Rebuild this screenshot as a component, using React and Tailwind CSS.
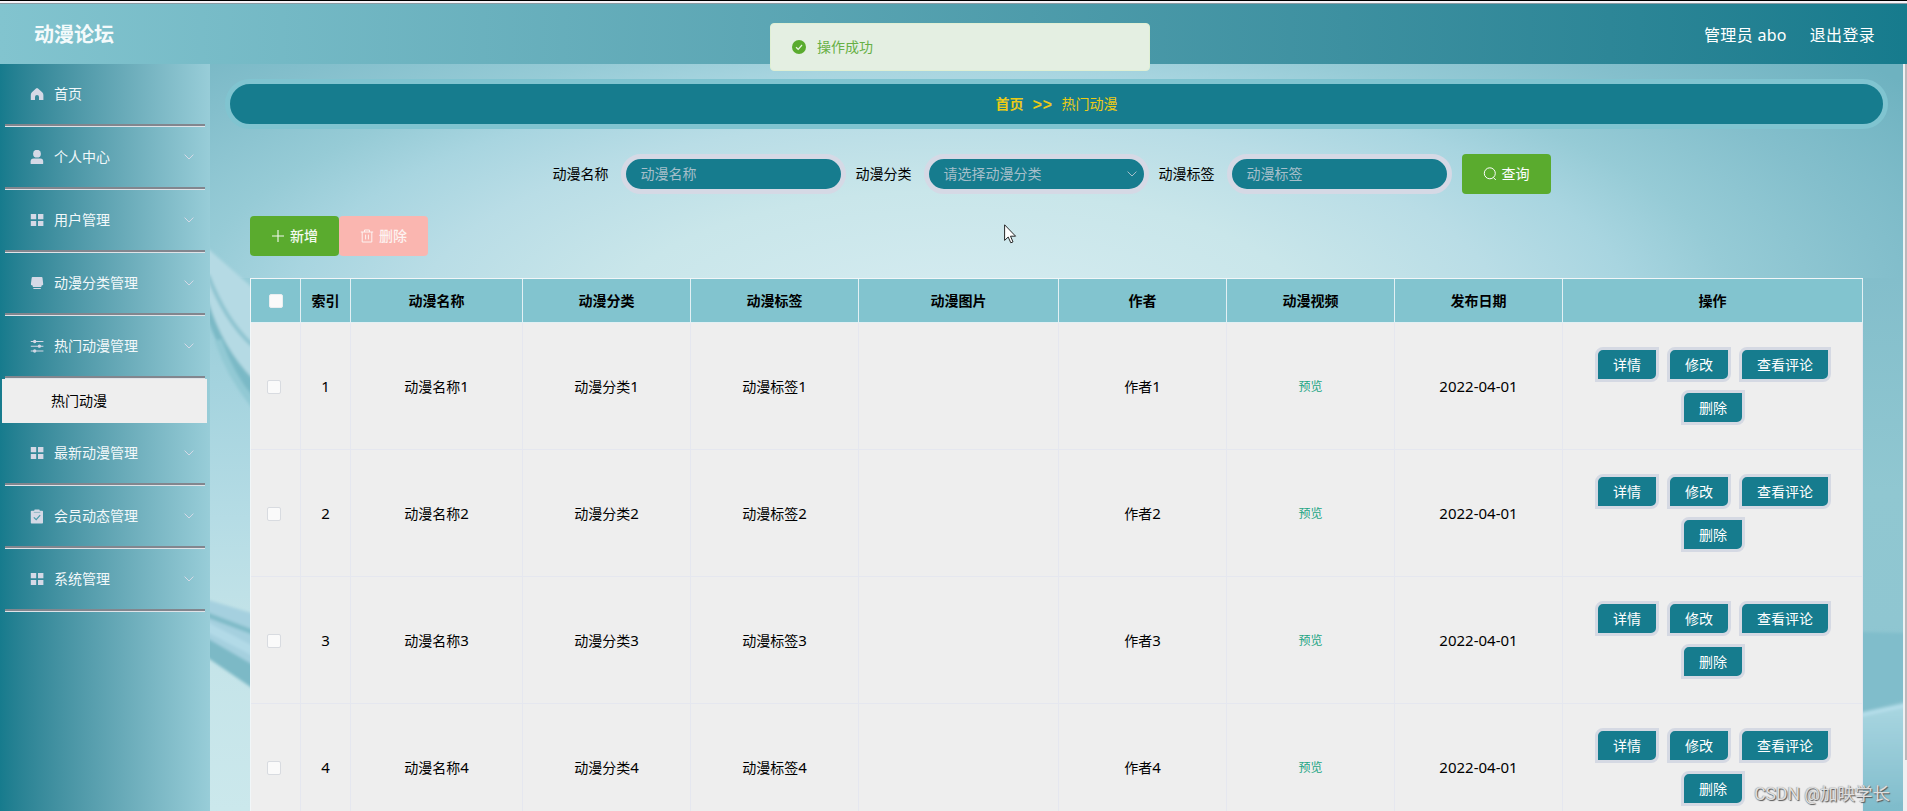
import React from "react";

const HomeIcon = () => (
  <svg width="14" height="14" viewBox="0 0 14 14" fill="currentColor">
    <path d="M7 1 Q7.4 1 8 1.6 L12.2 5.3 Q13.4 6.4 13.4 8 V13 H9 V10 A2 2 0 0 0 5 10 V13 H0.8 V8 Q0.8 6.4 1.9 5.3 L6 1.6 Q6.6 1 7 1Z" />
  </svg>
);
const UserIcon = () => (
  <svg width="14" height="14" viewBox="0 0 14 14" fill="currentColor">
    <circle cx="7" cy="3.7" r="3.9" />
    <path d="M0.6 13.4 V11.5 Q0.6 8.6 3.6 8.6 H10.4 Q13.2 8.6 13.2 11.5 V13.4 Q13.2 14 12.6 14 H1.2 Q0.6 14 0.6 13.4Z" />
  </svg>
);
const GridIcon = () => (
  <svg width="14" height="14" viewBox="0 0 14 14" fill="currentColor">
    <path d="M0.8 1H6.2V6.2H0.8ZM8 1H13.4V6.2H8ZM0.8 8H6.2V13H0.8ZM8 8H13.4V13H8Z" />
  </svg>
);
const CupIcon = () => (
  <svg width="14" height="14" viewBox="0 0 14 14" fill="currentColor">
    <path d="M2.6 1H11.6Q12.4 1 12.5 1.8L13.2 8Q13.3 9.2 12.4 9.2H11.8L11.2 11H3L2.3 9.2H1.7Q0.8 9.2 0.9 8L1.7 1.8Q1.8 1 2.6 1Z" />
    <path d="M3.2 12H11L10.6 13H3.6Z" />
  </svg>
);
const SlidersIcon = () => (
  <svg width="14" height="14" viewBox="0 0 14 14" stroke="currentColor" strokeWidth="1.1" fill="currentColor">
    <path d="M0.8 2.5H13.4M0.8 7.2H13.4M0.8 12H13.4" />
    <circle cx="4.7" cy="2.5" r="1.1" />
    <circle cx="9.4" cy="7.2" r="1.1" />
    <circle cx="4.7" cy="12" r="1.1" />
  </svg>
);
const ClipIcon = () => (
  <svg width="14" height="15" viewBox="0 0 14 15">
    <path d="M1.6 1.8H4.3V1Q4.3 0.4 5 0.4H9Q9.7 0.4 9.7 1V1.8H12.2Q13 1.8 13 2.6V13.8Q13 14.6 12.2 14.6H1.6Q0.8 14.6 0.8 13.8V2.6Q0.8 1.8 1.6 1.8Z" fill="currentColor" />
    <path d="M3.8 3.4H10.2" stroke="#7fb0bd" strokeWidth="0.8" />
    <path d="M3.8 8.4L6.2 10.7L10.2 6.2" stroke="#4a9bab" strokeWidth="1.2" fill="none" />
  </svg>
);
const Chevron = ({ className }) => (
  <svg className={className} width="10" height="6" viewBox="0 0 10 6" fill="none" stroke="currentColor" strokeWidth="1">
    <path d="M0.6 0.6L5 5L9.4 0.6" />
  </svg>
);

const menu = [
  { label: "首页", Icon: HomeIcon, leaf: true },
  { label: "个人中心", Icon: UserIcon },
  { label: "用户管理", Icon: GridIcon },
  { label: "动漫分类管理", Icon: CupIcon },
  { label: "热门动漫管理", Icon: SlidersIcon, child: "热门动漫" },
  { label: "最新动漫管理", Icon: GridIcon },
  { label: "会员动态管理", Icon: ClipIcon },
  { label: "系统管理", Icon: GridIcon },
];

function Sidebar() {
  return (
    <nav className="w-[210px] shrink-0 overflow-hidden bg-gradient-to-r from-[#167b8d] to-[#98cdd8]">
      {menu.map(({ label, Icon, leaf, child }) => (
        <div key={label}>
          <div className="flex h-[60px] items-center pr-4 pl-[30px] text-[#d5d9e6]">
            <Icon />
            <span className="ml-2.5 flex-1 text-sm text-[#f2f8fa]">{label}</span>
            {!leaf && <Chevron />}
          </div>
          <div className="mx-[5px] h-[3px] border-b border-[#dfe3e8] bg-[#82868e]" />
          {child && (
            <div className="mr-[3px] ml-0.5 flex h-11 items-center bg-[#eeeeee] pl-[49px] text-sm text-black">{child}</div>
          )}
        </div>
      ))}
    </nav>
  );
}

function Backdrop() {
  return (
    <svg className="absolute inset-0 h-full w-full" viewBox="210 64 1693 747" preserveAspectRatio="none">
      <defs>
        <radialGradient id="glow" gradientUnits="userSpaceOnUse" cx="0" cy="0" r="1.2" gradientTransform="translate(960 320) scale(1080 400)">
          <stop offset="0" stopColor="#d6ecf1" />
          <stop offset="0.27" stopColor="#c9e6ea" />
          <stop offset="0.42" stopColor="#b9dde6" />
          <stop offset="0.52" stopColor="#a8d5e0" />
          <stop offset="0.6" stopColor="#96cbd6" />
          <stop offset="0.72" stopColor="#84bfcc" />
          <stop offset="0.88" stopColor="#6eb2c0" />
        </radialGradient>
        <linearGradient id="left" x1="0" y1="0" x2="0" y2="1">
          <stop offset="0" stopColor="#97ccd7" />
          <stop offset="0.2" stopColor="#a4d3de" />
          <stop offset="0.45" stopColor="#b5dce5" />
          <stop offset="0.65" stopColor="#c3e3e8" />
          <stop offset="1" stopColor="#cbe8ec" />
        </linearGradient>
        <linearGradient id="right" x1="0" y1="0" x2="0" y2="1">
          <stop offset="0" stopColor="#83becb" />
          <stop offset="0.4" stopColor="#90c7d1" />
          <stop offset="0.65" stopColor="#8fc6d1" />
          <stop offset="1" stopColor="#7fbccb" />
        </linearGradient>
        <linearGradient id="ray" x1="0" y1="0" x2="0" y2="1">
          <stop offset="0" stopColor="#a9d6e1" />
          <stop offset="1" stopColor="#7fbccb" />
        </linearGradient>
        <filter id="soft" x="-20%" y="-20%" width="140%" height="140%">
          <feGaussianBlur stdDeviation="1.5" />
        </filter>
      </defs>
      <rect x="210" y="64" width="1693" height="747" fill="url(#glow)" />
      <rect x="210" y="278" width="41" height="533" fill="url(#left)" />
      <rect x="1862" y="278" width="41" height="533" fill="url(#right)" />
      <g filter="url(#soft)">
        <path d="M205 246L255 290V388Q225 350 205 300Z" fill="#b5dae4" />
        <path d="M208 275Q225 320 252 345" stroke="#8ec4d0" strokeWidth="4" fill="none" />
        <path d="M208 300Q222 348 254 380L254 398Q222 360 208 320Z" fill="#7ab9c6" />
        <path d="M218 340Q230 375 254 405" stroke="#92c9d4" strokeWidth="7" fill="none" />
        <path d="M205 599L255 614V680L205 650Z" fill="#a5d0df" />
        <path d="M205 614L255 633" stroke="#7fbbc8" strokeWidth="5" />
        <path d="M205 626L255 652" stroke="#b2dae7" strokeWidth="9" />
        <path d="M205 637L255 666V690L205 656Z" fill="#7bb9c6" />
        <path d="M1860 632L1906 633V700L1860 712Z" fill="#80bdcb" />
        <path d="M1860 714L1906 704V800L1860 811Z" fill="url(#ray)" />
        <path d="M1860 715L1906 705" stroke="#b5deea" strokeWidth="4" />
      </g>
    </svg>
  );
}

function Field({ label, placeholder, select }) {
  return (
    <div className="mr-2.5 flex items-center">
      <span className="w-[68px] text-black">{label}</span>
      <div className="flex h-10 w-[225px] items-center justify-between rounded-[20px] border-[5px] border-[#d5d9e5] bg-[#167c8e] pr-1.5 pl-[15px] text-[#a5bfca]">
        <span>{placeholder}</span>
        {select && <Chevron className="mr-px" />}
      </div>
    </div>
  );
}

const headers = ["索引", "动漫名称", "动漫分类", "动漫标签", "动漫图片", "作者", "动漫视频", "发布日期", "操作"];
const GRID = "grid grid-cols-[50px_50px_172px_168px_168px_200px_168px_168px_168px_300px]";
const CELL = "flex items-center justify-center border-r border-b border-[#e5e7ef] pt-0.5";

function Action({ children }) {
  return (
    <span className="flex h-[35px] items-center justify-center rounded-tl-lg rounded-br-lg border-[3px] border-[#d5d9e3] bg-[#167c8e] px-[15px] text-sm text-white">
      {children}
    </span>
  );
}

const Digits = ({ children }) => <span className="text-[15px]">{children}</span>;

function Row({ n }) {
  return (
    <div className={GRID + " h-[127px] bg-[#eeeeee]"}>
      <div className={CELL}>
        <span className="mr-[3px] size-3.5 rounded-[2px] border border-[#d8dbe0] bg-[#fafafa]" />
      </div>
      <div className={CELL}><Digits>{n}</Digits></div>
      <div className={CELL}>动漫名称<Digits>{n}</Digits></div>
      <div className={CELL}>动漫分类<Digits>{n}</Digits></div>
      <div className={CELL}>动漫标签<Digits>{n}</Digits></div>
      <div className={CELL} />
      <div className={CELL}>作者<Digits>{n}</Digits></div>
      <div className={CELL + " text-xs text-[#1da584]"}>预览</div>
      <div className={CELL}><Digits>2022-04-01</Digits></div>
      <div className="flex flex-col items-center justify-center gap-2 border-r border-b border-[#e5e7ef] pl-px">
        <div className="flex gap-2">
          <Action>详情</Action>
          <Action>修改</Action>
          <Action>查看评论</Action>
        </div>
        <Action>删除</Action>
      </div>
    </div>
  );
}

export default function App() {
  return (
    <div className="relative flex h-[811px] w-[1907px] flex-col overflow-hidden font-['Noto_Sans','Noto_Sans_CJK_SC',sans-serif] text-sm text-black">
      <div className="h-px shrink-0 bg-black" />
      <div className="h-[3px] shrink-0 border-b border-[#8a9ba3] bg-[#f6f3f8]" />
      <header className="flex h-[60px] shrink-0 items-center bg-gradient-to-r from-[#82c4cf] to-[#167b8d] pt-0.5 pr-8 pl-[34px] text-white">
        <h1 className="flex-1 text-xl font-bold text-[#f4fafb]">动漫论坛</h1>
        <span className="mr-[23px] text-base tracking-[0.3px]">管理员 abo</span>
        <span className="text-base tracking-[0.3px]">退出登录</span>
      </header>

      <div className="flex min-h-0 flex-1">
        <Sidebar />
        <main className="relative min-w-0 flex-1 overflow-hidden">
          <Backdrop />
          <div className="relative pt-[15px]">
            <div className="mx-[15px] flex h-[50px] items-center justify-center rounded-[25px] border-[5px] border-[#80c4d0] bg-[#167c8e] text-[#eccb16]">
              <span className="font-bold">首页</span>
              <span className="mx-[9px] pt-1 font-['Liberation_Mono',monospace] text-base font-bold tracking-[0.5px]">&gt;&gt;</span>
              <span>热门动漫</span>
            </div>

            <div className="mt-[25px] flex justify-center">
              <Field label="动漫名称" placeholder="动漫名称" />
              <Field label="动漫分类" placeholder="请选择动漫分类" select />
              <Field label="动漫标签" placeholder="动漫标签" />
              <button className="mr-2.5 flex h-10 w-[89px] items-center justify-center gap-[5px] rounded bg-[#5aab2e] text-white">
                <svg width="14" height="14" viewBox="0 0 14 14" fill="none" stroke="currentColor" strokeWidth="1">
                  <circle cx="6.8" cy="6.3" r="5.5" />
                  <path d="M10.4 10.5L12.8 13" />
                </svg>
                <span>查询</span>
              </button>
            </div>

            <div className="mt-[22px] ml-10 flex">
              <button className="flex h-10 w-[89px] items-center justify-center gap-[5px] rounded bg-[#5aab2e] font-medium text-[#f4faf0]">
                <svg width="14" height="14" viewBox="0 0 14 14" stroke="currentColor" strokeWidth="1.1">
                  <path d="M7 1V13M1 7H13" />
                </svg>
                <span>新增</span>
              </button>
              <button className="flex h-10 w-[89px] items-center justify-center gap-[5px] rounded bg-[#fab6b0] font-medium text-[#fdf3f1]">
                <svg width="14" height="14" viewBox="0 0 14 14" fill="none" stroke="currentColor" strokeWidth="1">
                  <path d="M0.8 3H13.2M4.5 3V1H9.5V3M2.2 3V13H11.8V3M5.6 5.6V10.4M8.4 5.6V10.4" />
                </svg>
                <span>删除</span>
              </button>
            </div>

            <div className="mt-[22px] ml-10 w-[1613px] border-t border-l border-[#f1f6f8]">
              <div className={GRID + " h-11 bg-[#82c4cf] font-bold"}>
                <div className="flex items-center justify-center border-r border-b border-[#e3f0f4]">
                  <span className="size-3.5 rounded-[2px] border border-[#e9eef0] bg-[#fafafa]" />
                </div>
                {headers.map((h) => (
                  <div key={h} className="flex items-center justify-center border-r border-b border-[#e3f0f4]">{h}</div>
                ))}
              </div>
              {[1, 2, 3, 4].map((n) => (
                <Row key={n} n={n} />
              ))}
            </div>
          </div>
        </main>
        <div className="w-1 shrink-0 bg-[#f1eff1] pl-0.5">
          <div className="h-[696px] bg-[#bbb9bb]" />
        </div>
      </div>

      <div className="absolute top-[23px] left-[770px] flex h-12 w-[380px] items-center rounded border border-[#e0efd4] bg-[#e4efe2] pl-[21px] text-[#67b045]">
        <svg width="14" height="14" viewBox="0 0 14 14">
          <circle cx="7" cy="7" r="7" fill="#5aab2e" />
          <path d="M4 7.2L6.2 9.3L10 5" stroke="#e9f5e2" strokeWidth="1.2" fill="none" />
        </svg>
        <span className="ml-[11px]">操作成功</span>
      </div>

      <svg className="absolute top-[224px] left-[1004px]" width="13" height="20" viewBox="0 0 13 20">
        <path d="M0.6 0.8V16.4L4.2 13L6.8 18.8L9 17.9L6.5 12.2H11.6Z" fill="#fff" stroke="#111" strokeWidth="0.9" />
      </svg>

      <div className="absolute right-[17px] bottom-1 font-['Roboto','Noto_Sans_CJK_SC',sans-serif] text-[17.5px] whitespace-nowrap text-[#dedede] [text-shadow:1px_1px_1px_#555,-0.5px_-0.5px_1px_#999]">
        CSDN @加映学长
      </div>
    </div>
  );
}
